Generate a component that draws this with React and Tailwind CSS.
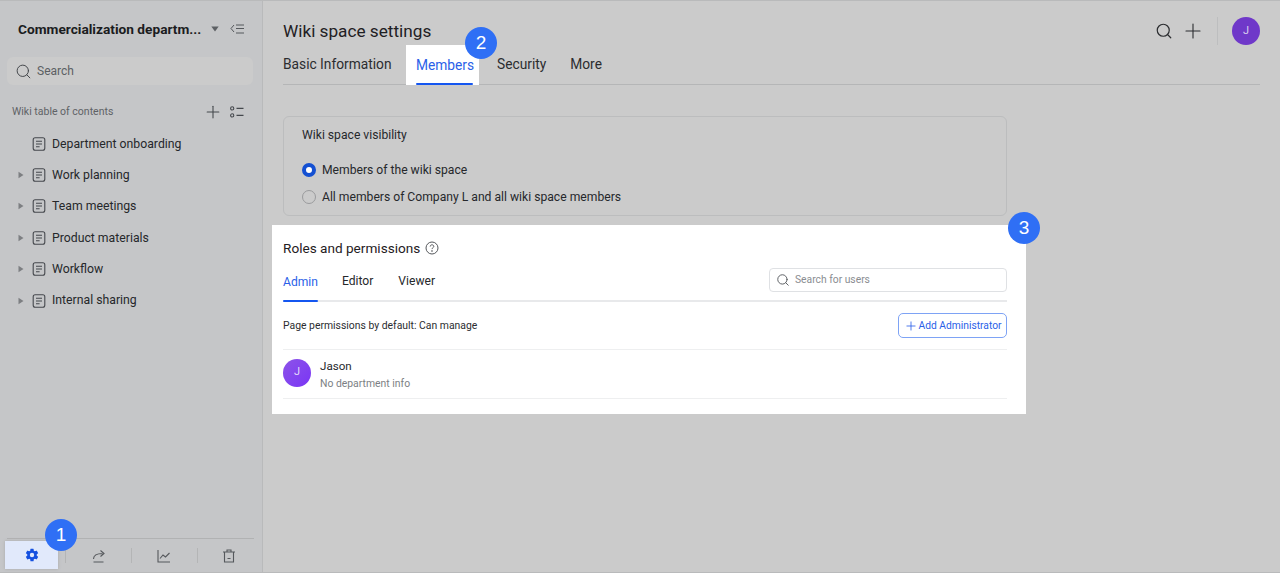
import { Search, Plus } from "lucide-react";
import { IoSettingsSharp } from "react-icons/io5";

const DocIcon = () => (
  <svg width="14" height="14" viewBox="0 0 14 14" fill="none" stroke="#45484d" strokeWidth="1.1" className="shrink-0">
    <rect x="1.2" y="0.8" width="11.6" height="12.4" rx="2" />
    <path d="M4 4.2h6M4 7h6M4 9.8h3.6" />
  </svg>
);

const Caret = () => (
  <svg width="6" height="8" viewBox="0 0 6 8" className="shrink-0"><path d="M0.5 0.8v6.4L5.5 4z" fill="#7d7f82" /></svg>
);

const Badge = ({ n, className }) => (
  <div className={"absolute z-10 w-8 h-8 rounded-full bg-[#2f6ff5] text-white flex items-center justify-center text-[19px] font-['Liberation_Sans',sans-serif] " + className}>{n}</div>
);

const Avatar = ({ bg, size, text }) => (
  <div className={"rounded-full flex items-center justify-center shrink-0 " + bg + " " + size + " " + text}>J</div>
);

const tree = [
  { name: "Department onboarding", caret: false },
  { name: "Work planning", caret: true },
  { name: "Team meetings", caret: true },
  { name: "Product materials", caret: true },
  { name: "Workflow", caret: true },
  { name: "Internal sharing", caret: true },
];

const Sidebar = () => (
  <aside className="relative w-[263px] shrink-0 h-full bg-[#c5c6c8] border-r border-[#b9babb] flex flex-col">
    <div className="flex items-center pl-[18px] h-[56px]">
      <span className="text-[13.7px] font-bold text-[#1b1c1e] w-[186px] whitespace-nowrap">Commercialization departm...</span>
      <svg width="8" height="6" viewBox="0 0 8 6" className="ml-[7px]"><path d="M0.3 0.5h7.4L4 5.5z" fill="#5d6064" /></svg>
      <svg width="15" height="11" viewBox="0 0 15 11" fill="none" stroke="#55585c" strokeWidth="1" className="ml-[11px]">
        <path d="M4 1l-3 3.5L4 8M6 1h8M6 4.5h8M6 9h8" />
      </svg>
    </div>
    <div className="ml-[7px] mr-[9px] h-[28px] rounded-md bg-[#cbcbcb] flex items-center pl-[8px] gap-[5px] text-[12px] text-[#5c5f63]">
      <Search size={17} strokeWidth={1.4} color="#44474b" />
      Search
    </div>
    <div className="flex items-center pl-[12px] mt-[15px] h-[24px] text-[10.5px] text-[#5f6266]">
      <span className="w-[191px]">Wiki table of contents</span>
      <Plus size={20} strokeWidth={1.3} color="#45484d" />
      <svg width="14" height="12" viewBox="0 0 14 12" fill="none" stroke="#45484d" strokeWidth="1.1" className="ml-[7px]">
        <circle cx="2.2" cy="2.4" r="1.6" /><circle cx="2.2" cy="9.4" r="1.6" /><path d="M6.5 2.4h7M6.5 9.4h7" />
      </svg>
    </div>
    <div className="mt-[4px] flex flex-col">
      {tree.map((item) => (
        <div key={item.name} className="flex items-center h-[31.4px] pl-[18px] text-[12.25px] text-[#26282b]">
          <span className="w-[14px]">{item.caret && <Caret />}</span>
          <DocIcon />
          <span className="ml-[6px]">{item.name}</span>
        </div>
      ))}
    </div>
    <div className="mt-auto ml-[7px] mr-[8px] border-t border-[#b1b2b3] flex items-center h-[34px] relative">
      <div className="absolute left-[-2px] top-[2px] w-[53px] h-[28px] bg-[#e1e9fb] shadow-[0_0_3px_#a9aaab] flex items-center justify-center">
        <IoSettingsSharp size={14} color="#1450e0" />
      </div>
      <div className="flex w-full pl-[58px] items-center text-[#55585c]">
        <div className="w-px h-[15px] bg-[#b4b5b6] mr-[26px]" />
        <svg width="14" height="14" viewBox="0 0 14 14" fill="none" stroke="#55585c" strokeWidth="1.1">
          <path d="M1.5 13h10M1.5 10c0-3.5 3-5.500 9-5.500M8.500 1.500l3.500 3-3.500 3" />
        </svg>
        <div className="w-px h-[15px] bg-[#b4b5b6] mx-[25px]" />
        <svg width="14" height="14" viewBox="0 0 14 14" fill="none" stroke="#55585c" strokeWidth="1.1">
          <path d="M1 1v12h12M3 9.500L6 6l2.500 2L12.500 4" />
        </svg>
        <div className="w-px h-[15px] bg-[#b4b5b6] ml-[26px] mr-[24px]" />
        <svg width="14" height="14" viewBox="0 0 14 14" fill="none" stroke="#55585c" strokeWidth="1.1">
          <path d="M1 3h12M5 3V1h4v2M2.500 3v10h9V3M5.500 9.500h3" />
        </svg>
      </div>
      <Badge n="1" className="left-[38px] top-[-20px]" />
    </div>
  </aside>
);

const Main = () => (
  <main className="flex-1 h-full bg-[#cbcbcb] relative min-w-0">
    <div className="flex justify-between pl-[20px] pr-[20px] pt-[16px] h-[44px]">
      <h1 className="text-[17.2px] leading-[28px] text-[#1f2023]">Wiki space settings</h1>
      <div className="flex items-center h-[28px] text-[#2b2d30]">
        <Search size={18} strokeWidth={1.6} />
        <Plus size={24} strokeWidth={1.1} className="ml-[8px]" />
        <div className="w-px h-[28px] bg-[#bdbebf] ml-[12px]" />
        <Avatar bg="bg-[#6f38c9]" size="w-7 h-7 ml-[14px]" text="text-[11px] text-[#d8cdee]" />
      </div>
    </div>
    <div className="mx-[20px] h-[40px] border-b border-[#b5b6b7] flex items-stretch text-[13.75px] text-[#2b2d30] relative">
      <div className="flex items-center w-[123px]">Basic Information</div>
      <div className="relative bg-white w-[73px] flex items-center pl-[10px] text-[#2a5fe8] h-[40px] z-[1]">
        Members
        <div className="absolute left-[10px] right-[6px] bottom-0 h-[2px] rounded-sm bg-[#1456f0]" />
      </div>
      <div className="flex items-center ml-[18px]">Security</div>
      <div className="flex items-center ml-[24px]">More</div>
      <Badge n="2" className="left-[182px] top-[-18px]" />
    </div>
    <div className="ml-[20px] mt-[31px] w-[724px] h-[100px] border border-[#bcbdbe] rounded-md px-[18px] pt-[9px] text-[12.15px] text-[#26282b]">
      <div className="leading-[18px]">Wiki space visibility</div>
      <div className="mt-[17px] flex items-center gap-[6px] h-[18px]">
        <span className="w-[14px] h-[14px] rounded-full border-[4px] border-[#1450d2] bg-white" />
        Members of the wiki space
      </div>
      <div className="mt-[9px] flex items-center gap-[6px] h-[18px]">
        <span className="w-[14px] h-[14px] rounded-full border border-[#9a9b9d]" />
        All members of Company L and all wiki space members
      </div>
    </div>
    <section className="relative ml-[9px] mt-[9px] w-[754px] h-[189px] bg-white pl-[11px] pr-[19px] pt-[12px]">
      <Badge n="3" className="right-[-14px] top-[-13px]" />
      <div className="flex items-center gap-[5px] text-[13.6px] leading-[22px] text-[#1f2023]">
        Roles and permissions
        <svg width="14" height="14" viewBox="0 0 14 14" fill="none" stroke="#55585c" strokeWidth="1">
          <circle cx="7" cy="7" r="6" />
          <path d="M5.2 5.5c0-1 .8-1.700 1.800-1.700s1.800.7 1.800 1.600c0 1.300-1.800 1.300-1.800 2.700" />
          <circle cx="7" cy="10" r=".4" />
        </svg>
      </div>
      <div className="flex items-stretch h-[35px] mt-[8px] border-b-2 border-[#e8e9eb] text-[12.1px] text-[#26282b] relative">
        <div className="relative text-[#2a5fe8] w-[35px] flex items-center h-[35px] pb-[4px]">
          Admin
          <div className="absolute left-0 right-0 bottom-[0px] h-[2px] bg-[#1456f0] rounded-sm" />
        </div>
        <div className="flex items-center ml-[24px] pb-[4px]">Editor</div>
        <div className="flex items-center ml-[25px] pb-[4px]">Viewer</div>
        <div className="ml-auto self-start mt-[1px] w-[238px] h-[24px] border border-[#dfe1e4] rounded-[4px] flex items-center pl-[6px] gap-[5px] text-[10.3px] text-[#8a8d91]">
          <Search size={14} strokeWidth={1.6} color="#55585c" />
          Search for users
        </div>
      </div>
      <div className="flex items-center justify-between h-[48px] border-b border-[#eeeff0] text-[10.4px] text-[#2b2d30]">
        Page permissions by default: Can manage
        <div className="flex items-center h-[25px] w-[109px] justify-center whitespace-nowrap border border-[#7ea3f5] rounded-[5px] text-[10.25px] text-[#2a5fe8] gap-[1px]">
          <Plus size={14} strokeWidth={1.4} />
          Add Administrator
        </div>
      </div>
      <div className="flex items-center h-[49px] border-b border-[#eeeff0]">
        <Avatar bg="bg-gradient-to-br from-[#8d52e8] to-[#7a33f5] mb-[3px]" size="w-7 h-7" text="text-[11px] text-[#e4d9fb]" />
        <div className="ml-[9px] mb-[1px]">
          <div className="text-[11.6px] leading-[20px] text-[#26282b]">Jason</div>
          <div className="text-[10.4px] leading-[16px] text-[#7c7f84]">No department info</div>
        </div>
      </div>
    </section>
  </main>
);

export default function App() {
  return (
    <div className="w-[1280px] h-[573px] flex overflow-hidden border-t border-b border-[#b9babb] font-['Roboto',sans-serif]">
      <Sidebar />
      <Main />
    </div>
  );
}
